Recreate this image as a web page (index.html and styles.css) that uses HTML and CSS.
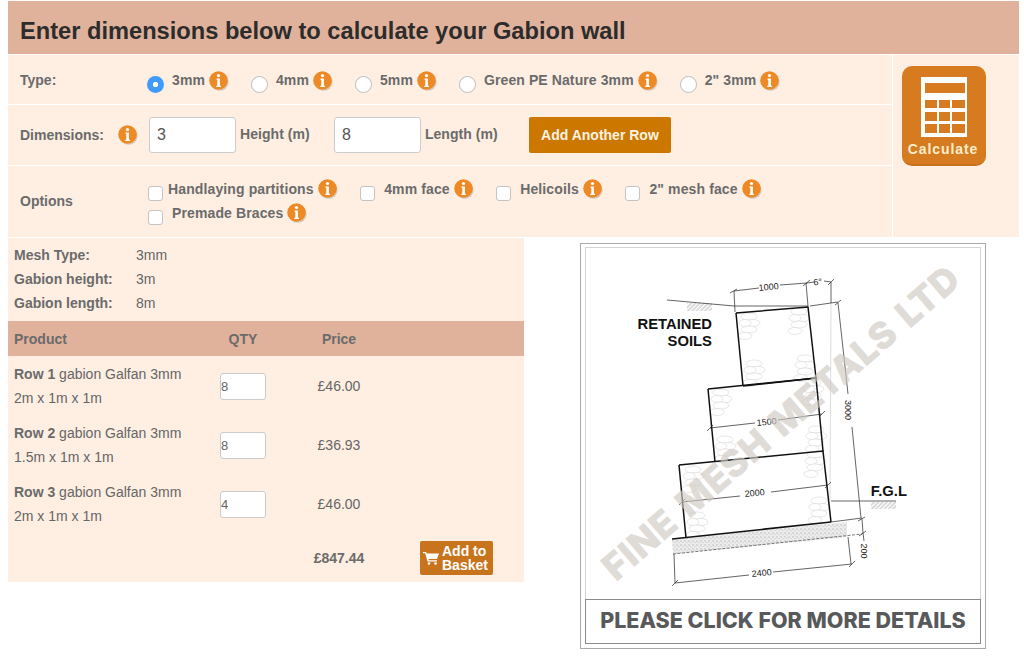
FILE: index.html
```html
<!DOCTYPE html>
<html lang="en">
<head>
<meta charset="utf-8">
<title>Gabion wall calculator</title>
<link rel="stylesheet" href="styles.css">
</head>
<body>
<svg class="defs" width="0" height="0" aria-hidden="true">
  <defs>
    <symbol id="info" viewBox="0 0 20 20">
      <circle cx="10.6" cy="10.8" r="9" fill="#8a8378" opacity=".35"/>
      <circle cx="9.5" cy="9.5" r="9.300" fill="#ee8a26"/>
      <circle cx="9.5" cy="4.6" r="1.6" fill="#fff"/>
      <path d="M7.6 7.6h3.3v7.2h1.1v1.3H7.2v-1.3h1.1V9H7.6z" fill="#fff"/>
    </symbol>
  </defs>
</svg>
<main class="page">
  <h1 class="title">Enter dimensions below to calculate your Gabion wall</h1>
  <div class="form-grid">
    <form class="fields">
      <div class="row row-type">
        <span class="label label-type">Type:</span>
        <label class="opt"><input class="radio" type="radio" name="t" checked><span>3mm</span><svg class="info"><use href="#info"/></svg></label>
        <label class="opt"><input class="radio" type="radio" name="t"><span>4mm</span><svg class="info"><use href="#info"/></svg></label>
        <label class="opt"><input class="radio" type="radio" name="t"><span>5mm</span><svg class="info"><use href="#info"/></svg></label>
        <label class="opt"><input class="radio" type="radio" name="t"><span>Green PE Nature 3mm</span><svg class="info"><use href="#info"/></svg></label>
        <label class="opt"><input class="radio" type="radio" name="t"><span>2" 3mm</span><svg class="info"><use href="#info"/></svg></label>
      </div>
      <div class="row row-dim">
        <span class="label label-dim">Dimensions:</span>
        <svg class="info info-dim"><use href="#info"/></svg>
        <input class="num" type="text" value="3">
        <span class="label unit">Height (m)</span>
        <input class="num" type="text" value="8">
        <span class="label unit">Length (m)</span>
        <button class="add-row" type="button">Add Another Row</button>
      </div>
      <div class="row row-options">
        <span class="label label-options">Options</span>
        <div class="opt-list">
          <label class="chk chk-tight"><input class="check" type="checkbox"><span>Handlaying partitions</span><svg class="info"><use href="#info"/></svg></label>
          <label class="chk"><input class="check" type="checkbox"><span>4mm face</span><svg class="info"><use href="#info"/></svg></label>
          <label class="chk"><input class="check" type="checkbox"><span>Helicoils</span><svg class="info"><use href="#info"/></svg></label>
          <label class="chk"><input class="check" type="checkbox"><span>2" mesh face</span><svg class="info"><use href="#info"/></svg></label>
          <label class="chk"><input class="check" type="checkbox"><span>Premade Braces</span><svg class="info"><use href="#info"/></svg></label>
        </div>
      </div>
    </form>
    <aside class="calc-cell">
      <button class="calc" type="button">
        <svg class="calc-icon" viewBox="0 0 46 60" aria-hidden="true">
          <path fill="#fff" d="M0 0h46v60H0z"/>
          <g fill="#d67b1f">
            <rect x="4" y="6" width="40" height="10"/>
            <rect x="4" y="23" width="12" height="8"/><rect x="18" y="23" width="11" height="8"/><rect x="31" y="23" width="13" height="8"/>
            <rect x="4" y="35" width="12" height="9"/><rect x="18" y="35" width="11" height="9"/><rect x="31" y="35" width="13" height="9"/>
            <rect x="4" y="47" width="12" height="9"/><rect x="18" y="47" width="11" height="9"/><rect x="31" y="47" width="13" height="9"/>
          </g>
        </svg>
        <span>Calculate</span>
      </button>
    </aside>
  </div>
  <div class="lower">
    <section class="summary">
      <dl class="facts">
        <div class="fact"><dt>Mesh Type:</dt><dd>3mm</dd></div>
        <div class="fact"><dt>Gabion height:</dt><dd>3m</dd></div>
        <div class="fact"><dt>Gabion length:</dt><dd>8m</dd></div>
      </dl>
      <table class="products">
        <thead>
          <tr><th class="c-prod">Product</th><th class="c-qty">QTY</th><th class="c-price">Price</th><th class="c-act"></th></tr>
        </thead>
        <tbody>
          <tr><td class="c-prod"><b>Row 1</b> gabion Galfan 3mm<br>2m x 1m x 1m</td><td class="c-qty"><input class="qty" type="text" value="8"></td><td class="c-price">£46.00</td><td></td></tr>
          <tr><td class="c-prod"><b>Row 2</b> gabion Galfan 3mm<br>1.5m x 1m x 1m</td><td class="c-qty"><input class="qty" type="text" value="8"></td><td class="c-price">£36.93</td><td></td></tr>
          <tr><td class="c-prod"><b>Row 3</b> gabion Galfan 3mm<br>2m x 1m x 1m</td><td class="c-qty"><input class="qty" type="text" value="4"></td><td class="c-price">£46.00</td><td></td></tr>
          <tr class="total"><td></td><td></td><td class="c-price"><b>£847.44</b></td>
            <td class="c-act"><button class="basket" type="button">
              <svg class="cart" viewBox="0 0 16 14" aria-hidden="true"><path fill="#fff" d="M0 1h3l1 1.5h12l-2 5.5H5.5l.4 1.300H14v1.200H4.500L2.200 2.300H0z"/><circle cx="6" cy="12.500" r="1.300" fill="#fff"/><circle cx="12.500" cy="12.500" r="1.300" fill="#fff"/></svg>
              <span>Add to<br>Basket</span></button></td></tr>
        </tbody>
      </table>
    </section>
    <figure class="figure">
      <div class="frame">
        <svg class="drawing" viewBox="586 248 395 351" role="img" aria-label="Gabion wall cross section">
          <defs>
            <pattern id="stip" width="4" height="4" patternUnits="userSpaceOnUse">
              <rect width="4" height="4" fill="#ececec"/>
              <circle cx="1" cy="1" r=".7" fill="#b4b4b4"/><circle cx="3" cy="2.600" r=".6" fill="#c4c4c4"/>
            </pattern>
            <pattern id="hatch" width="3" height="3" patternUnits="userSpaceOnUse" patternTransform="rotate(45)">
              <rect width="3" height="3" fill="#fff"/><path d="M0 0v3M1.500 0v3" stroke="#bbb" stroke-width=".7"/>
            </pattern>
            <g id="st" fill="#fff" stroke="#d6d6d6" stroke-width=".6">
              <ellipse cx="11" cy="3.500" rx="8" ry="3.500"/><ellipse cx="15" cy="10" rx="7" ry="3.500"/><ellipse cx="7" cy="10" rx="6" ry="3.500"/>
              <ellipse cx="11" cy="16.500" rx="8" ry="3.500"/><ellipse cx="7" cy="23" rx="7" ry="3.500"/>
            </g>
          </defs>
          <rect x="687" y="303" width="25" height="8" fill="url(#hatch)"/>
          <rect x="871" y="502" width="25" height="7" fill="url(#hatch)"/>
          <polygon points="672,539 847,522 847,537 673,554" fill="url(#stip)"/>
          <g>
            <use href="#st" x="738" y="313"/><use href="#st" x="788" y="308"/><use href="#st" x="743" y="360"/><use href="#st" x="794" y="355"/>
            <use href="#st" x="710" y="389"/><use href="#st" x="802" y="379"/><use href="#st" x="714" y="436"/><use href="#st" x="805" y="426"/>
            <use href="#st" x="682" y="466"/><use href="#st" x="804" y="451"/><use href="#st" x="686" y="512"/><use href="#st" x="808" y="497"/>
          </g>
          <path class="ln-light" d="M831 303L830 500"/>
          <g class="ln-heavy">
            <path d="M736 313L808 307L816 378L743 386"/>
            <path d="M743 386L736 313"/>
            <path d="M708 389L816 378L823 451M708 389L715 462"/>
            <path d="M679 465L823 451L831 522M679 465L686 538"/>
            <path d="M672 539L831 522"/>
          </g>
          <path class="ln-dash" d="M673 554L862 534"/>
          <g class="ln-thin">
            <path d="M667 300L734 306L808 306M810 306L838 302M831 522L862 518"/>
            <path d="M735 312L734 291M808 306L806 283M831 303V282"/>
            <path d="M734 291L759 288M780 285L807 283M807 283L814 282M824 281L831 282"/>
            <path d="M730 293L737 289M803 286L810 280M828 285L834 279M835 305L841 300"/>
            <path d="M838 303L848 394M852 427L861 518"/>
            <path d="M858 521L865 517M859 536L866 531"/>
            <path d="M862 519L863 533L864 541"/>
            <path d="M710 428L755 423M778 420L822 414M707 431L713 425M819 417L825 411"/>
            <path d="M682 502L740 496M771 492L828 485M679 505L685 499M825 488L831 482"/>
            <path d="M831 501H896"/>
            <path d="M675 583L749 575M773 572L852 564M672 586L678 580M849 567L855 561"/>
            <path d="M674 554L675 583M848 537L851 564"/>
          </g>
          <g class="dim">
            <text transform="translate(769 290) rotate(-6)">1000</text>
            <text transform="translate(818 285) rotate(-6)" class="dim-sm">6°</text>
            <text transform="translate(767 425) rotate(-6)">1500</text>
            <text transform="translate(755 496) rotate(-6)">2000</text>
            <text transform="translate(762 576) rotate(-6)">2400</text>
            <text transform="translate(845 410) rotate(90)">3000</text>
            <text transform="translate(861 551) rotate(90)">200</text>
          </g>
          <g class="callout">
            <text x="712" y="328.500">RETAINED</text>
            <text x="712" y="345.500">SOILS</text>
            <text x="907" y="496">F.G.L</text>
          </g>
          <text class="mark" transform="translate(616 582) rotate(-40.800)">FINE MESH METALS LTD</text>
        </svg>
        <div class="details">PLEASE CLICK FOR MORE DETAILS</div>
      </div>
    </figure>
  </div>
</main>
</body>
</html>
```

FILE: styles.css
```css
* { box-sizing: border-box; }
html, body { margin: 0; padding: 0; background: #fff; }
body { font-family: "Liberation Sans", Arial, sans-serif; font-size: 14px; color: #666; }
.defs { display: block; height: 0; overflow: hidden; }
.page { width: 1011px; margin: 1px 0 0 8px; }
.title { margin: 0; height: 53px; padding: 0 12px; background: #e0b29b; color: #2c2c2c; font-size: 23.650px; line-height: 60px; font-weight: 700; white-space: nowrap; }
.form-grid { display: grid; grid-template-columns: 884px 126px; column-gap: 1px; margin-top: 1px; }
.fields { display: flex; flex-direction: column; gap: 1px; }
.row { display: flex; align-items: center; background: #feefe2; padding-left: 12px; }
.row-type { height: 49px; }
.row-dim { height: 60px; }
.row-options { height: 71px; align-items: flex-start; }
.label { font-weight: 700; color: #6b6b6b; }
.label-type { width: 127px; margin-top: 1px; }
.opt { display: flex; align-items: center; margin-right: 22px; font-weight: 700; color: #6b6b6b; line-height: 24px; letter-spacing: .1px; }
.opt span { margin: -1px 4px 0 8px; }
.row-type .opt { margin-top: 2px; }
.radio { appearance: none; width: 17px; height: 17px; margin: 7px 0 0; border-radius: 50%; border: 1px solid #bdbdbd; background: #fff; }
.radio:checked { border: 0; background: radial-gradient(circle, #fff 0 2.500px, #3f9bfb 3px); }
.info { width: 20px; height: 20px; flex: none; }
.label-dim { margin-right: 14px; }
.info-dim { margin-right: 11px; }
.num { width: 87px; height: 36px; margin: 0; padding: 0 7px; border: 1px solid #ccc; border-radius: 3px; background: #fff; font: 16px "Liberation Sans", Arial, sans-serif; color: #555; }
.unit { margin: -2px 24.200px 0 4px; letter-spacing: .05px; }
.add-row { width: 142px; height: 36px; margin-left: 7px; padding: 0; border: 0; border-radius: 2px; background: #cc7700; color: #fdf3e3; font: 700 14px "Liberation Sans", Arial, sans-serif; }
.label-options { width: 128px; margin-top: 27px; }
.opt-list { display: flex; flex-wrap: wrap; width: 640px; padding-top: 11px; }
.chk { display: flex; align-items: center; margin-right: 22.500px; height: 24px; font-weight: 700; color: #6b6b6b; letter-spacing: .12px; }
.chk span { margin: 0 4px 0 9px; }
.chk-tight span { margin-left: 5px; }
.check { appearance: none; width: 15px; height: 15px; margin: 8px 0 0; border: 1px solid #c4c4c4; border-radius: 3px; background: #fff; }
.calc-cell { background: #feefe2; padding: 11px 0 0 9px; }
.calc { display: flex; flex-direction: column; align-items: center; width: 84px; height: 100px; padding: 11px 2px 0 0; border: 0; border-bottom: 2px solid #c5721f; border-radius: 10px; background: #d67b1f; color: #fbeecb; font: 700 14px "Liberation Sans", Arial, sans-serif; letter-spacing: .9px; }
.calc-icon { width: 46px; height: 60px; flex: none; margin-left: 2px; }
.calc span { margin-top: 4px; }
.lower { display: flex; align-items: flex-start; margin-top: 1px; }
.summary { width: 516px; height: 344px; background: #feefe2; }
.facts { margin: 0; padding: 5px 6px 6px; color: #666; line-height: 24px; }
.fact { display: flex; }
.fact dt { width: 122px; font-weight: 700; color: #6b6b6b; }
.fact dd { margin: 0; }
.products { width: 516px; border-collapse: collapse; table-layout: fixed; color: #666; }
.products th { height: 35px; padding: 0; background: #e0b29b; color: #6b6b6b; font-weight: 700; }
.products td { padding: 6px 0 5px; line-height: 24px; vertical-align: middle; }
.products b { color: #6b6b6b; }
.c-prod { width: 212px; }
.products .c-prod { padding-left: 6px; text-align: left; }
.c-qty { width: 46px; text-align: center; }
.c-price { width: 146px; text-align: center; }
.c-act { width: 112px; }
.qty { display: block; width: 46px; height: 27px; margin: 0; padding: 0; border: 1px solid #ccc; border-radius: 3px; background: #fff; font: 13px "Liberation Sans", Arial, sans-serif; color: #666; }
.products .total td { height: 49px; padding: 0; }
.products .total .c-act { padding: 0; }
.basket { display: flex; align-items: center; gap: 3px; width: 73px; height: 34px; margin-left: 8px; padding: 0 0 0 3px; border: 0; border-radius: 2px; background: #c8741c; color: #fff; font: 700 14px/14px "Liberation Sans", Arial, sans-serif; text-align: left; }
.cart { width: 16px; height: 14px; flex: none; }
.figure { width: 406px; height: 406px; margin: 5px 0 0 56px; padding: 3px 4px 4px; border: 1px solid #aaa; }
.frame { border: 1px solid #d4d4d4; border-bottom: 0; }
.drawing { display: block; width: 395px; height: 351px; }
.details { height: 45px; margin: 0 -1px; border: 1px solid #8a8a8a; color: #58595b; font: 800 21.500px/41px Inter, sans-serif; text-align: center; white-space: nowrap; }
.ln-heavy path { fill: none; stroke: #111; stroke-width: 1.500; }
.ln-thin path { fill: none; stroke: #222; stroke-width: .7; }
.ln-light { fill: none; stroke: #ddd; stroke-width: 1; }
.ln-dash { fill: none; stroke: #555; stroke-width: .8; stroke-dasharray: 3 1.500; }
.dim text { font-size: 9px; fill: #222; text-anchor: middle; }
.dim .dim-sm { font-size: 9px; }
.callout text { font-size: 14.800px; font-weight: 700; fill: #111; text-anchor: end; }
.mark { font-family: Inter, sans-serif; font-size: 36px; font-weight: 800; word-spacing: 3px; letter-spacing: 1.100px; fill: #cfc9c3; stroke: #cfc9c3; stroke-width: .8; opacity: .65; }
```
